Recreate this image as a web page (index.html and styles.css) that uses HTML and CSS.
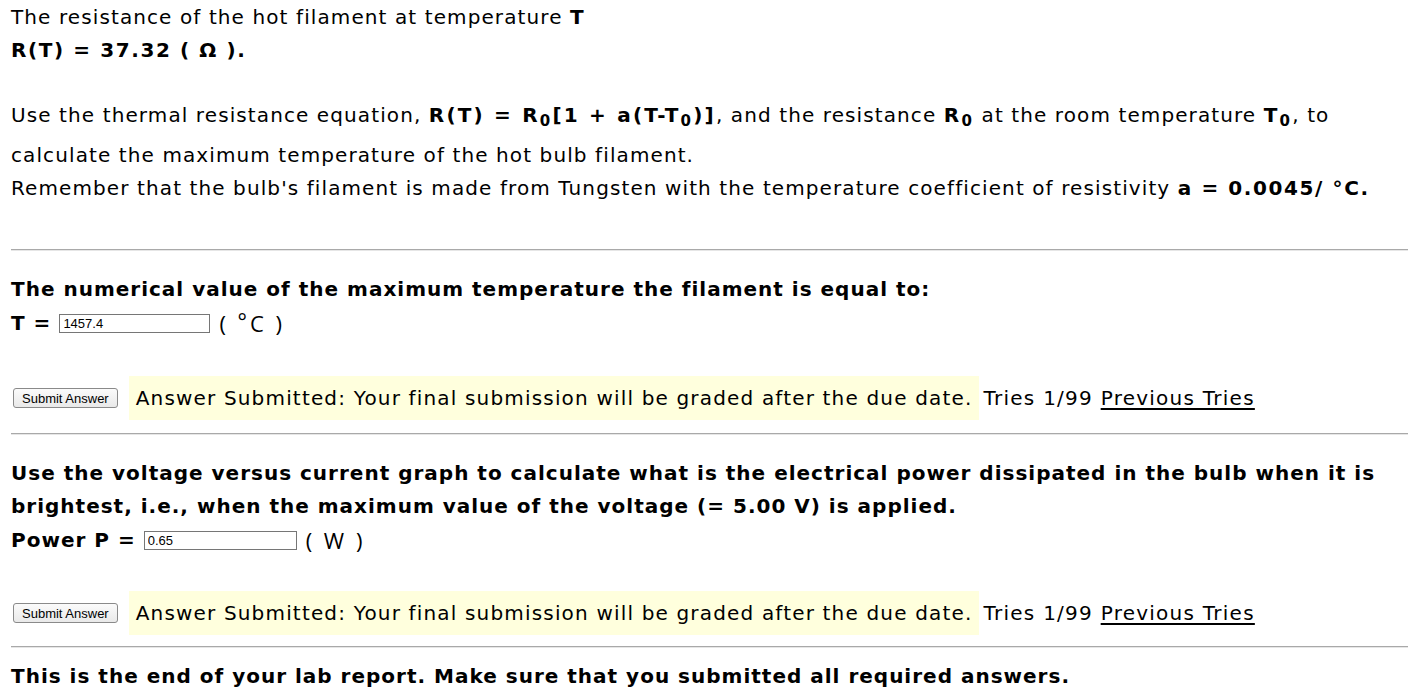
FILE: index.html
```html
<!DOCTYPE html>
<html>
<head>
<meta charset="utf-8">
<link rel="stylesheet" href="styles.css">
</head>
<body>
<div class="page">
  <div class="intro">
    <div class="line">The resistance of the hot filament at temperature <b>T</b></div>
    <div class="line"><b>R(T) = 37.32 ( Ω ).</b></div>
  </div>
  <div class="para">
    <div class="line first">Use the thermal resistance equation, <b class="eq">R(T) = R<sub>0</sub>[1 + a(T-T<sub>0</sub>)]</b>, and the resistance <b class="eq">R<sub>0</sub></b> at the room temperature <b class="eq">T<sub>0</sub></b>, to</div>
    <div class="line">calculate the maximum temperature of the hot bulb filament.</div>
    <div class="line">Remember that the bulb's filament is made from Tungsten with the temperature coefficient of resistivity <b>a = 0.0045/ °C.</b></div>
  </div>
  <hr class="rule r1">
  <div class="q1">
    <div class="line heading">The numerical value of the maximum temperature the filament is equal to:</div>
    <div class="line answer"><b class="wide">T =</b> <input class="field f1" type="text" value="1457.4"> <span class="unit">( <span class="deg2">°</span>C )</span></div>
  </div>
  <div class="submit s1">
    <button class="btn">Submit Answer</button>
    <span class="note">Answer Submitted: Your final submission will be graded after the due date.</span>
    <span class="tries">Tries 1/99 <a href="#">Previous Tries</a></span>
  </div>
  <hr class="rule r2">
  <div class="q2">
    <div class="line bold2">Use the voltage versus current graph to calculate what is the electrical power dissipated in the bulb when it is</div>
    <div class="line bold2">brightest, i.e., when the maximum value of the voltage (= 5.00 V) is applied.</div>
    <div class="line answer"><b class="bold2">Power P =</b> <input class="field f2" type="text" value="0.65"> <span class="unit2">( W )</span></div>
  </div>
  <div class="submit s2">
    <button class="btn">Submit Answer</button>
    <span class="note">Answer Submitted: Your final submission will be graded after the due date.</span>
    <span class="tries">Tries 1/99 <a href="#">Previous Tries</a></span>
  </div>
  <hr class="rule r3">
  <div class="line bold2 end">This is the end of your lab report. Make sure that you submitted all required answers.</div>
</div>
</body>
</html>
```
FILE: styles.css
```css
html, body {
  margin: 0;
  padding: 0;
  background: #fff;
}
body {
  font-family: "DejaVu Sans", Verdana, sans-serif;
  font-size: 20px;
  letter-spacing: 1.1px;
  color: #000;
  overflow: hidden;
}
b {
  letter-spacing: 1.6px;
}
b.eq {
  letter-spacing: 2.2px;
}
.bold2, .heading, .wide {
  letter-spacing: 1px;
}
.page {
  padding-left: 11px;
}
.line {
  line-height: 33px;
  white-space: nowrap;
}
.intro {
  padding-top: 1px;
}
.para {
  margin-top: 32px;
}
.para .first {
  padding-bottom: 7px;
}
sub {
  font-size: 75%;
  vertical-align: -4px;
  line-height: 0;
}
.rule {
  margin: 0;
  border: 0;
  height: 2px;
  background: linear-gradient(#a9a9a9 0 1px, #e6e6e6 1px 2px);
}
.r1 { margin-top: 44px; }
.q1 { margin-top: 22px; }
.heading { font-weight: bold; }
.wide { font-weight: bold; }
.answer {
  display: flex;
  align-items: center;
  margin-top: 1px;
}
.field {
  font-family: "Liberation Sans", Arial, sans-serif;
  font-size: 13px;
  letter-spacing: 0;
  height: 19px;
  box-sizing: border-box;
  border: 1px solid #767676;
  padding: 1px 3px;
  margin: 0 9px 0 8px;
}
.f1 { width: 151px; }
.f2 { width: 153px; }
.unit, .unit2 {
  font-family: "Open Sans", "DejaVu Sans", sans-serif;
  font-size: 22px;
  letter-spacing: 3px;
}
.deg2 { position: relative; top: -3px; }
.submit {
  display: flex;
  align-items: center;
  height: 44px;
}
.s1 { margin-top: 36px; }
.btn {
  font-family: "Liberation Sans", Arial, sans-serif;
  font-size: 13px;
  letter-spacing: 0;
  height: 20px;
  padding: 0 8px;
  margin: 0 11px 0 2px;
  border: 1px solid #8a8a8a;
  border-radius: 3px;
  background: linear-gradient(#fbfbfb, #e9e9e9);
  color: #000;
}
.note {
  background: #ffffdd;
  align-self: stretch;
  display: flex;
  align-items: center;
  padding: 0 6px 0 7px;
  letter-spacing: 1.17px;
}
.tries {
  margin-left: 5px;
  letter-spacing: 1.25px;
}
.tries a {
  color: #000;
  text-decoration: underline;
  text-underline-offset: 3px;
}
.r2 { margin-top: 13px; }
.q2 { margin-top: 22px; }
.bold2 { font-weight: bold; }
.s2 { margin-top: 34px; }
.r3 { margin-top: 11px; }
.end { margin-top: 12px; }
```
